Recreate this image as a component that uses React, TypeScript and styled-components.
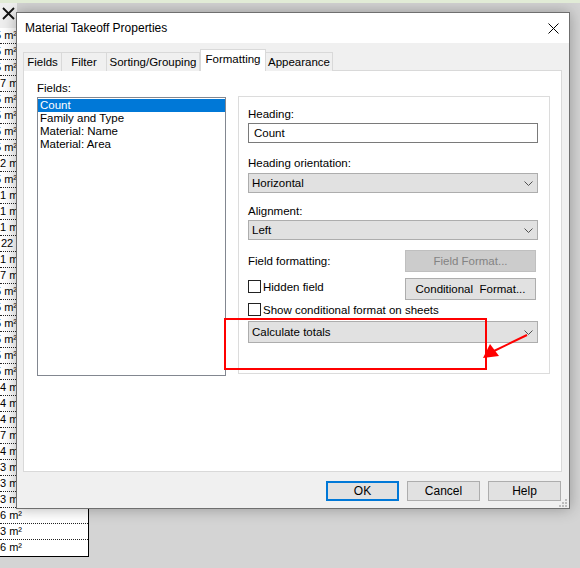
import React from 'react';
import styled, {createGlobalStyle} from 'styled-components';

const GlobalStyle = createGlobalStyle`
  html, body {
    margin: 0;
    padding: 0;
  }
  body {
    background: #d4d4d4;
    font-family: "Liberation Sans", Arial, sans-serif;
    color: #000;
  }
`;

type Row = { text: string; shift: number };

const A: Row = {text: '5 m²', shift: -5};
const B = (d: string): Row => ({text: `${d} m²`, shift: 0});

const sheetRows: Row[] = [
    A, A, A, B('7'), A, A, A, A, B('2'), A, B('1'), B('1'), B('1'),
    {text: '22 m²', shift: 1}, B('1'), B('7'), A, A, A, A, A, A,
    B('4'), B('4'), B('4'), B('7'), B('4'), B('3'), B('3'), B('3'),
    B('6'), B('3'), B('6'),
];

const fields = ['Count', 'Family and Type', 'Material: Name', 'Material: Area'];

const tabs = [
    {label: 'Fields', width: 39},
    {label: 'Filter', width: 45},
    {label: 'Sorting/Grouping', width: 93},
    {label: 'Formatting', width: 66, active: true},
    {label: 'Appearance', width: 67},
];

const Chevron = () => (
    <svg width="9" height="5" viewBox="0 0 9 5">
        <path d="M0.5 0.5 L4.5 4.5 L8.5 0.5" fill="none" stroke="#505050" strokeWidth="1"/>
    </svg>
);

const App = () => {
    return (
        <>
            <GlobalStyle/>
            <Desktop>
                <Sheet>
                    <SheetHeader>
                        <svg width="14" height="14" viewBox="0 0 14 14">
                            <path d="M2 1 L13 12 M13 1 L2 12" stroke="#111" strokeWidth="1.8"/>
                        </svg>
                    </SheetHeader>
                    <SheetTable>
                        {sheetRows.map((r, i) => (
                            <SheetRow key={i} $shift={r.shift} $last={i === sheetRows.length - 1}>{r.text}</SheetRow>
                        ))}
                    </SheetTable>
                </Sheet>

                <Dialog>
                    <TitleBar>
                        <span>Material Takeoff Properties</span>
                        <svg width="11" height="11" viewBox="0 0 11 11">
                            <path d="M0.5 0.5 L10.5 10.5 M10.5 0.5 L0.5 10.5" stroke="#000" strokeWidth="1"/>
                        </svg>
                    </TitleBar>
                    <Body>
                        <Tabs>
                            {tabs.map(t => (
                                <Tab key={t.label} $width={t.width} $active={!!t.active}>{t.label}</Tab>
                            ))}
                        </Tabs>
                        <Panel>
                            <LeftCol>
                                <Label>Fields:</Label>
                                <FieldList>
                                    {fields.map((f, i) => (
                                        <FieldItem key={f} $selected={i === 0}>{f}</FieldItem>
                                    ))}
                                </FieldList>
                            </LeftCol>
                            <Group>
                                <Label>Heading:</Label>
                                <TextBox $top={1}>Count</TextBox>
                                <Label $top={13}>Heading orientation:</Label>
                                <Select $top={2}>
                                    <span>Horizontal</span>
                                    <Chevron/>
                                </Select>
                                <Label $top={11}>Alignment:</Label>
                                <Select $top={1}>
                                    <span>Left</span>
                                    <Chevron/>
                                </Select>
                                <ButtonRow $top={10}>
                                    <span>Field formatting:</span>
                                    <SideButton $disabled>Field Format...</SideButton>
                                </ButtonRow>
                                <ButtonRow $top={6}>
                                    <Check $top={2}>
                                        <Box/>
                                        <span>Hidden field</span>
                                    </Check>
                                    <SideButton>Conditional&nbsp; Format...</SideButton>
                                </ButtonRow>
                                <Check $top={3}>
                                    <Box/>
                                    <span>Show conditional format on sheets</span>
                                </Check>
                                <Select $top={5} $height={22}>
                                    <span>Calculate totals</span>
                                    <Chevron/>
                                </Select>
                            </Group>
                        </Panel>
                        <Footer>
                            <DialogButton $default>OK</DialogButton>
                            <DialogButton>Cancel</DialogButton>
                            <DialogButton>Help</DialogButton>
                        </Footer>
                    </Body>
                    <Grip>
                        <svg width="9" height="9" viewBox="0 0 9 9">
                            <rect x="7" y="1" width="2" height="2" fill="#bdbdbd"/>
                            <rect x="4" y="4" width="2" height="2" fill="#bdbdbd"/>
                            <rect x="7" y="4" width="2" height="2" fill="#bdbdbd"/>
                            <rect x="1" y="7" width="2" height="2" fill="#bdbdbd"/>
                            <rect x="4" y="7" width="2" height="2" fill="#bdbdbd"/>
                            <rect x="7" y="7" width="2" height="2" fill="#bdbdbd"/>
                        </svg>
                    </Grip>
                </Dialog>

                <Markup width="580" height="568" viewBox="0 0 580 568">
                    <rect x="225" y="319" width="261" height="50" fill="none" stroke="#ff0000" strokeWidth="2"/>
                    <line x1="527" y1="335" x2="494" y2="351" stroke="#ff0000" strokeWidth="2"/>
                    <polygon points="483,358 490,344 499,356" fill="#ff0000"/>
                </Markup>
            </Desktop>
        </>
    );
};

export default App;

const Desktop = styled.div`
  position: relative;
  width: 580px;
  height: 568px;
  overflow: hidden;
  box-sizing: border-box;
  background: #d4d4d4;
  border-top: 3px solid #e1ebd6;
`;

const Sheet = styled.div`
  width: 89px;
  display: flex;
  flex-direction: column;
`;

const SheetHeader = styled.div`
  height: 25px;
  width: 17px;
  background: #efefef;
  display: flex;
  align-items: flex-start;
  padding: 4px 0 0 1px;
  box-sizing: border-box;
`;

const SheetTable = styled.div`
  background: #fff;
  border-right: 1px solid #000;
  border-bottom: 1px solid #000;
  overflow: hidden;
`;

const SheetRow = styled.div<{ $shift: number; $last: boolean }>`
  height: 16px;
  box-sizing: border-box;
  border-bottom: ${p => p.$last ? 'none' : '1px dotted #222'};
  font-size: 11px;
  line-height: 15px;
  text-indent: ${p => p.$shift}px;
  white-space: nowrap;
`;

const Dialog = styled.div`
  position: absolute;
  left: 16px;
  top: 9px;
  width: 554px;
  height: 497px;
  box-sizing: border-box;
  border: 1px solid #6f6f6f;
  background: #f0f0f0;
  box-shadow: 0 0 14px rgba(0, 0, 0, 0.3);
  display: flex;
  flex-direction: column;
  font-size: 11.5px;
`;

const TitleBar = styled.div`
  height: 30px;
  flex-shrink: 0;
  background: #fff;
  display: flex;
  align-items: center;
  justify-content: space-between;
  padding: 0 10px 0 8px;
  font-size: 12px;
`;

const Body = styled.div`
  flex: 1;
  display: flex;
  flex-direction: column;
  padding: 6px 7px 0 6px;
`;

const Tabs = styled.div`
  display: flex;
  align-items: flex-end;
  height: 22px;
  margin-bottom: -1px;
  position: relative;
  z-index: 1;
`;

const Tab = styled.div<{ $width: number; $active: boolean }>`
  width: ${p => p.$width}px;
  height: ${p => p.$active ? 22 : 19}px;
  box-sizing: border-box;
  border: 1px solid #d9d9d9;
  border-bottom: none;
  border-left-width: ${p => p.$active ? 1 : 0}px;
  background: ${p => p.$active ? '#fff' : '#f0f0f0'};
  display: flex;
  align-items: center;
  justify-content: center;
  padding-bottom: ${p => p.$active ? 3 : 0}px;
  &:first-child {
    border-left-width: 1px;
  }
`;

const Panel = styled.div`
  height: 402px;
  box-sizing: border-box;
  background: #fff;
  border: 1px solid #d9d9d9;
  display: flex;
  align-items: flex-start;
  padding: 10px 0 0 13px;
`;

const LeftCol = styled.div`
  width: 189px;
  display: flex;
  flex-direction: column;
`;

const Label = styled.div<{ $top?: number }>`
  line-height: 15px;
  height: 15px;
  margin-top: ${p => p.$top || 0}px;
`;

const FieldList = styled.div`
  height: 279px;
  margin-top: 1px;
  box-sizing: border-box;
  border: 1px solid #828790;
  background: #fff;
  padding-top: 1px;
`;

const FieldItem = styled.div<{ $selected: boolean }>`
  line-height: 13px;
  height: 13px;
  padding-left: 2px;
  background: ${p => p.$selected ? '#0078d7' : 'transparent'};
  color: ${p => p.$selected ? '#fff' : '#000'};
`;

const Group = styled.div`
  margin: 15px 0 0 12px;
  width: 312px;
  height: 278px;
  box-sizing: border-box;
  border: 1px solid #dcdcdc;
  padding: 10px 11px 0 9px;
  display: flex;
  flex-direction: column;
`;

const TextBox = styled.div<{ $top?: number }>`
  height: 20px;
  box-sizing: border-box;
  margin-top: ${p => p.$top || 0}px;
  border: 1px solid #7a7a7a;
  background: #fff;
  padding: 0 5px;
  line-height: 18px;
`;

const Select = styled.div<{ $top?: number; $height?: number }>`
  height: ${p => p.$height || 20}px;
  box-sizing: border-box;
  margin-top: ${p => p.$top || 0}px;
  border: 1px solid #adadad;
  background: #e1e1e1;
  padding: 0 4px 0 3px;
  display: flex;
  align-items: center;
  justify-content: space-between;
`;

const ButtonRow = styled.div<{ $top?: number }>`
  display: flex;
  align-items: center;
  justify-content: space-between;
  margin-top: ${p => p.$top || 0}px;
`;

const SideButton = styled.div<{ $disabled?: boolean }>`
  width: 131px;
  height: 22px;
  margin-right: 2px;
  box-sizing: border-box;
  border: 1px solid ${p => p.$disabled ? '#bfbfbf' : '#adadad'};
  background: ${p => p.$disabled ? '#cccccc' : '#e1e1e1'};
  color: ${p => p.$disabled ? '#838383' : '#000'};
  display: flex;
  align-items: center;
  justify-content: center;
`;

const Check = styled.div<{ $top?: number }>`
  display: flex;
  align-items: center;
  gap: 2px;
  height: 13px;
  margin-top: ${p => p.$top || 0}px;
  align-self: flex-start;
`;

const Box = styled.span`
  width: 13px;
  height: 13px;
  box-sizing: border-box;
  border: 1px solid #222;
  background: #fff;
`;

const Footer = styled.div`
  display: flex;
  justify-content: flex-end;
  gap: 8px;
  margin-top: 9px;
  padding-right: 1px;
`;

const DialogButton = styled.div<{ $default?: boolean }>`
  width: 73px;
  height: 20px;
  box-sizing: border-box;
  border: ${p => p.$default ? '2px solid #0078d7' : '1px solid #adadad'};
  background: #e1e1e1;
  display: flex;
  align-items: center;
  justify-content: center;
  font-size: 12px;
`;

const Grip = styled.div`
  position: absolute;
  right: 2px;
  bottom: 1px;
  width: 9px;
  height: 9px;
  display: flex;
`;

const Markup = styled.svg`
  position: absolute;
  left: 0;
  top: -3px;
  pointer-events: none;
`;
